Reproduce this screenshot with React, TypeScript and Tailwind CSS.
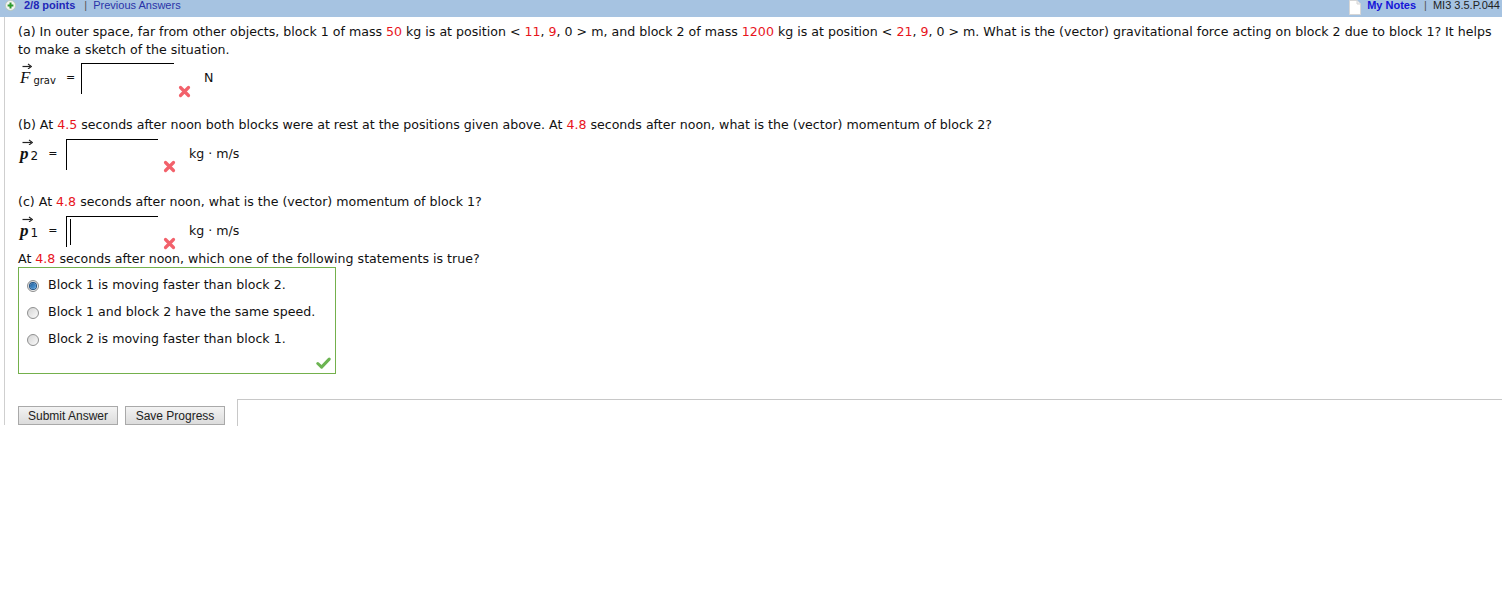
// WebAssign-style question panel — MI3 3.5.P.044

import React from "react";

// ─── Small drawings ─────────────────────────────────────────────────────────

const PlusBadge: React.FC = () => (
  <svg width="11" height="11" viewBox="0 0 11 11" className="shrink-0">
    <circle cx="5.5" cy="5.5" r="5" fill="#f4f4f4" stroke="#b8c8b8" strokeWidth="0.8" />
    <path d="M5.5 2.6v5.8M2.6 5.5h5.8" stroke="#2e9a2e" strokeWidth="2" />
  </svg>
);

const NoteIcon: React.FC = () => (
  <svg width="12" height="15" viewBox="0 0 12 15" className="shrink-0">
    <path d="M0.5 0.5h7.5l3.5 3.5v10.5h-11z" fill="#fff" stroke="#d6d6d6" />
    <path d="M8 0.5v3.5h3.5" fill="#eee" stroke="#d6d6d6" />
  </svg>
);

const WrongMark: React.FC = () => (
  <svg width="13" height="13" viewBox="0 0 13 13" className="shrink-0">
    <path d="M2.5 2.5l8 8M10.5 2.5l-8 8" stroke="#f2616b" strokeWidth="3.2" strokeLinecap="round" />
  </svg>
);

const RightMark: React.FC = () => (
  <svg width="15" height="12" viewBox="0 0 15 12">
    <path d="M1.8 6.5l3.8 3.6 7.6-8" fill="none" stroke="#6cb452" strokeWidth="3" strokeLinecap="round" strokeLinejoin="round" />
  </svg>
);

const VecArrow: React.FC<{ w: number }> = ({ w }) => (
  <svg width={w} height="6" viewBox={`0 0 ${w} 6`} className="absolute left-[2px] top-[-6px]">
    <path d={`M0.5 3.5H${w - 1.5}`} stroke="#222" strokeWidth="1.2" />
    <path d={`M${w - 4} 1L${w - 0.5} 3.5L${w - 4} 6`} fill="none" stroke="#222" strokeWidth="1.1" />
  </svg>
);

const Radio: React.FC<{ checked?: boolean }> = ({ checked }) => (
  <span className="w-[12px] h-[12px] rounded-full border border-[#8e8f8f] bg-gradient-to-br from-[#d4d4d4] to-[#fbfbfb] flex items-center justify-center shrink-0">
    {checked && <span className="w-[6px] h-[6px] rounded-full bg-gradient-to-br from-[#1f5e9c] to-[#5aa4e0] ring-1 ring-[#1c4f84]" />}
  </span>
);

// ─── Pieces ─────────────────────────────────────────────────────────────────

const Red: React.FC<{ children: React.ReactNode }> = ({ children }) => (
  <span className="text-[#e8141c]">{children}</span>
);

const Vec: React.FC<{ sym: string; bold?: boolean; arrow: number }> = ({ sym, bold, arrow }) => (
  <span className="relative inline-block font-['Liberation_Serif',serif] italic text-[17px] leading-none">
    <span className={bold ? "font-bold" : ""}>{sym}</span>
    <VecArrow w={arrow} />
  </span>
);

const AnswerInput: React.FC<{ width: string; cursor?: boolean }> = ({ width, cursor }) => (
  <div className={`${width} h-[31px] border-t border-l border-black bg-white relative`}>
    {cursor && <span className="absolute left-[3px] top-[2px] w-px h-[26px] bg-black" />}
  </div>
);

const Choice: React.FC<{ label: string; checked?: boolean }> = ({ label, checked }) => (
  <label className="flex items-center gap-[9px] h-[27px]">
    <Radio checked={checked} />
    <span>{label}</span>
  </label>
);

const MomentumRow: React.FC<{ sub: string; cursor?: boolean }> = ({ sub, cursor }) => (
  <div className="flex items-start mt-[5px] h-[34px]">
    <div className="w-[48px] flex items-start pt-[6px] pl-[2px]">
      <Vec sym="p" bold arrow={11} />
      <span className="text-[12px] leading-none mt-[5px] ml-[2px]">{sub}</span>
      <span className="ml-[10px] mt-[1px] text-[11px]">=</span>
    </div>
    <AnswerInput width="w-[92px]" cursor={cursor} />
    <div className="ml-[5px] mt-[21px]"><WrongMark /></div>
    <span className="ml-[13px] mt-[6px]">kg · m/s</span>
  </div>
);

// ─── Page ───────────────────────────────────────────────────────────────────

export default function App() {
  return (
    <div className="w-[1502px] h-[601px] bg-white text-[#111] font-['DejaVu_Sans',sans-serif] text-[12.6px] overflow-hidden">
      {/* Top bar */}
      <header className="h-[17px] bg-[#a6c3e1] flex items-start justify-between font-['Liberation_Sans',Arial,sans-serif] text-[11px] leading-[11px]">
        <div className="flex items-center pl-[5px]">
          <PlusBadge />
          <span className="ml-[8px] font-bold text-[#1f27b8]">2/8 points</span>
          <span className="ml-[9px] text-[#555]">|</span>
          <span className="ml-[6px] text-[#2a33a8]">Previous Answers</span>
        </div>
        <div className="flex items-start pr-[2px] h-full">
          <NoteIcon />
          <span className="ml-[6px] font-bold text-[#1414d8]">My Notes</span>
          <span className="ml-[8px] text-[#555]">|</span>
          <span className="ml-[6px] text-[#222]">MI3 3.5.P.044</span>
        </div>
      </header>

      {/* Body with left rule */}
      <div className="ml-[4px] border-l border-[#cfcfcf] h-[408px] pl-[13px] pt-[6px]">
        <p className="leading-[18px]">
          (a) In outer space, far from other objects, block 1 of mass <Red>50</Red> kg is at position &lt; <Red>11</Red>,{" "}
          <Red>9</Red>, 0 &gt; m, and block 2 of mass <Red>1200</Red> kg is at position &lt; <Red>21</Red>, <Red>9</Red>, 0 &gt; m.
          What is the (vector) gravitational force acting on block 2 due to block 1? It helps to make a sketch of the situation.
        </p>

        {/* F grav */}
        <div className="flex items-start mt-[4px] h-[34px]">
          <div className="w-[63px] flex items-start pt-[6px] pl-[2px]">
            <Vec sym="F" arrow={10} />
            <span className="ml-[3px] mt-[7px] text-[10px] leading-none">grav</span>
            <span className="ml-[10px] mt-[1px] text-[11px]">=</span>
          </div>
          <AnswerInput width="w-[93px]" />
          <div className="ml-[4px] mt-[22px]"><WrongMark /></div>
          <span className="ml-[13px] mt-[6px]">N</span>
        </div>

        <p className="leading-[18px] mt-[19px]">
          (b) At <Red>4.5</Red> seconds after noon both blocks were at rest at the positions given above. At <Red>4.8</Red> seconds after noon, what is the (vector) momentum of block 2?
        </p>

        <MomentumRow sub="2" />

        <p className="leading-[18px] mt-[20px]">
          (c) At <Red>4.8</Red> seconds after noon, what is the (vector) momentum of block 1?
        </p>

        <MomentumRow sub="1" cursor />

        <p className="leading-[18px]">
          At <Red>4.8</Red> seconds after noon, which one of the following statements is true?
        </p>

        {/* Multiple choice */}
        <div className="mt-[-1px] w-[318px] h-[107px] border border-[#74b04c] pl-[8px] pt-[4px] relative">
          <Choice label="Block 1 is moving faster than block 2." checked />
          <Choice label="Block 1 and block 2 have the same speed." />
          <Choice label="Block 2 is moving faster than block 1." />
          <div className="absolute right-[4px] bottom-[4px]"><RightMark /></div>
        </div>

        {/* Actions */}
        <div className="flex items-end mt-[25px]">
          <div className="flex items-center gap-[7px] pb-[1px] font-['Liberation_Sans',Arial,sans-serif] text-[12px]">
            <button className="h-[19px] w-[100px] border border-[#a9a9a9] bg-gradient-to-b from-[#f3f3f3] to-[#dcdcdc] text-[#222]">Submit Answer</button>
            <button className="h-[19px] w-[100px] border border-[#a9a9a9] bg-gradient-to-b from-[#f3f3f3] to-[#dcdcdc] text-[#222]">Save Progress</button>
          </div>
          <div className="ml-[12px] flex-1 h-[27px] border-t border-l border-[#c8c8c8]" />
        </div>
      </div>
    </div>
  );
}
